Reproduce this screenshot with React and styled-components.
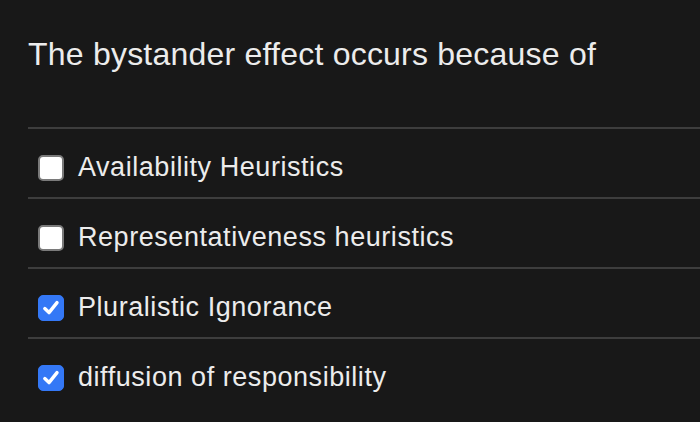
import React, { useState } from 'react'
import { styled, createGlobalStyle } from 'styled-components'

const GlobalStyle = createGlobalStyle`
  html, body {
    margin: 0;
    padding: 0;
    background: #181818;
  }
  body {
    font-family: "Liberation Sans", Arial, sans-serif;
    color: #e8e8e8;
  }
`

const Page = styled.div`
  width: 700px;
  height: 422px;
  overflow: hidden;
  background: #181818;
  padding: 34px 0 0 28px;
  box-sizing: border-box;
`

const Question = styled.h1`
  margin: 0 0 53px;
  font-size: 32px;
  font-weight: 400;
  line-height: 40px;
  letter-spacing: 0.22px;
  color: #ececec;
`

const List = styled.ul`
  list-style: none;
  margin: 0;
  padding: 0;
`

const Row = styled.li`
  display: flex;
  align-items: center;
  gap: 14px;
  height: 70px;
  padding: 8px 0 0 10px;
  box-sizing: border-box;
  border-top: 2px solid #3d3d3d;
`

const Box = styled.span`
  flex: none;
  width: 26px;
  height: 26px;
  margin-top: 2px;
  box-sizing: border-box;
  border-radius: 5px;
  display: flex;
  align-items: center;
  justify-content: center;
  background: ${p => (p.$checked ? '#3478f6' : '#ffffff')};
  border: ${p => (p.$checked ? '1px solid #3478f6' : '2px solid #7a7a7a')};
  cursor: pointer;
`

const Label = styled.span`
  font-size: 27px;
  letter-spacing: 0.55px;
  color: #ececec;
  cursor: pointer;
`

const options = [
  { text: 'Availability Heuristics', checked: false },
  { text: 'Representativeness heuristics', checked: false },
  { text: 'Pluralistic Ignorance', checked: true },
  { text: 'diffusion of responsibility', checked: true },
]

const Check = () => (
  <svg width="20" height="20" viewBox="0 0 20 20">
    <path d="M3.8 10.6 L8 14.6 L16 4.6" fill="none" stroke="#fff" strokeWidth="3.4" strokeLinecap="round" strokeLinejoin="round" />
  </svg>
)

const App = () => {
  const [state, setState] = useState(options.map(o => o.checked))
  const toggle = i => setState(s => s.map((v, j) => (j === i ? !v : v)))
  return (
    <>
      <GlobalStyle />
      <Page>
        <Question>The bystander effect occurs because of</Question>
        <List>
          {options.map((o, i) => (
            <Row key={o.text} onClick={() => toggle(i)}>
              <Box $checked={state[i]}>{state[i] && <Check />}</Box>
              <Label>{o.text}</Label>
            </Row>
          ))}
        </List>
      </Page>
    </>
  )
}

export default App
